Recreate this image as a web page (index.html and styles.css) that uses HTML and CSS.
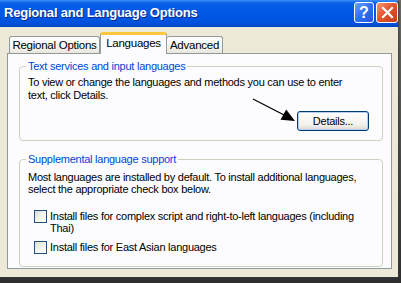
FILE: index.html
```html
<!DOCTYPE html>
<html lang="en">
<head>
    <meta charset="UTF-8">
    <title>Regional and Language Options</title>
    <link rel="stylesheet" href="styles.css">
</head>
<body>

<div class="window">
    <div class="titlebar">
        <div class="title">Regional and Language Options</div>
        <div class="tbtn help">?</div>
        <div class="tbtn close">
            <svg width="13" height="13" viewBox="0 0 13 13">
                <path d="M2 2 L11 11 M11 2 L2 11" stroke="#fff" stroke-width="2.2" stroke-linecap="square"/>
            </svg>
        </div>
    </div>

    <div class="content">
        <div class="tabs">
            <div class="tab tab-regional">Regional Options</div>
            <div class="tab active tab-languages">Languages</div>
            <div class="tab tab-advanced">Advanced</div>
        </div>

        <div class="panel">
            <fieldset class="group group-text">
                <legend>Text services and input languages</legend>
                <p>To view or change the languages and methods you can use to enter<br>text, click Details.</p>
                <div class="btn-row">
                    <button class="btn default">Details...</button>
                </div>
            </fieldset>

            <fieldset class="group group-supp">
                <legend>Supplemental language support</legend>
                <p>Most languages are installed by default. To install additional languages,<br>select the appropriate check box below.</p>
                <label class="check first">
                    <span class="box"></span>
                    <span class="check-text">Install files for complex script and right-to-left languages (including<br>Thai)</span>
                </label>
                <label class="check">
                    <span class="box"></span>
                    <span class="check-text">Install files for East Asian languages</span>
                </label>
            </fieldset>
        </div>
    </div>

    <!-- annotation arrow drawn over the dialog -->
    <svg class="arrow" viewBox="0 0 401 283" width="401" height="283">
        <line x1="253" y1="99" x2="286" y2="116" stroke="#000" stroke-width="1.3"/>
        <polygon points="295,121 280.5,119.8 286.2,109.6" fill="#000"/>
    </svg>
</div>

</body>
</html>
```

FILE: styles.css
```css
html, body {
    margin: 0;
    padding: 0;
}
body {
    width: 401px;
    height: 283px;
    overflow: hidden;
    background: linear-gradient(to bottom, #6d6d66, #2e2e2e);
    font-family: "Liberation Sans", Arial, sans-serif;
    font-size: 11px;
    letter-spacing: -0.25px;
    color: #000;
}
.window {
    position: relative;
    width: 398px;
    height: 277px;
    background-color: #ece9d8;
    box-shadow: 1px 1px 2px #3a3a3a;
    display: flex;
    flex-direction: column;
}
.titlebar {
    height: 27px;
    box-sizing: border-box;
    display: flex;
    align-items: center;
    padding: 0 0 2px 4px;
    background: linear-gradient(to bottom, #3d8ff7 0, #0a60e8 3px, #0058e8 40%, #0052dc 85%, #0046c4 100%);
}
.title {
    flex: 1;
    color: white;
    font-weight: bold;
    font-size: 13px;
    letter-spacing: -0.2px;
    text-shadow: 1px 1px 0 #0a2a8a;
}
.tbtn {
    width: 20px;
    height: 21px;
    box-sizing: border-box;
    border: 1px solid #fff;
    border-radius: 3px;
    display: flex;
    align-items: center;
    justify-content: center;
    color: white;
    font-weight: bold;
    font-size: 16px;
    letter-spacing: 0;
}
.help {
    margin-right: 2px;
    background: linear-gradient(135deg, #6aa0ff, #2f6ff0 50%, #1d5ae0);
}
.close {
    width: 22px;
    background: linear-gradient(135deg, #f29a78, #e2562f 45%, #c73d1a);
}
.content {
    flex: 1;
    padding: 5px 6px 0 7px;
}
.tabs {
    display: flex;
    align-items: flex-end;
    height: 21px;
    padding-left: 2px;
}
.tab {
    height: 17px;
    box-sizing: border-box;
    border: 1px solid #919b9c;
    border-bottom: none;
    border-radius: 3px 3px 0 0;
    background: linear-gradient(to bottom, #ffffff, #f3f2ec 70%, #e8e6dc);
    display: flex;
    align-items: center;
    justify-content: center;
    font-size: 11.5px;
}
.tab-regional {
    width: 91px;
}
.tab-advanced {
    width: 56px;
    border-left: none;
}
.tab.active {
    width: 67px;
    height: 22px;
    margin-bottom: -1px;
    position: relative;
    z-index: 1;
    background: #fcfcfe;
    border-top: 3px solid #ffc83c;
    padding-bottom: 4px;
}
.panel {
    height: 216px;
    box-sizing: border-box;
    border: 1px solid #919b9c;
    background-color: #fcfcfe;
    padding: 6px 8px 0 11px;
}
.group {
    margin: 0;
    border: 1px solid #d0d0bf;
    border-radius: 4px;
    padding: 0 0 0 8px;
    font-size: 11px;
    line-height: 13px;
}
.group legend {
    color: #0046d5;
    padding: 0 2px;
    margin-left: -2px;
    line-height: 13px;
}
.group p {
    margin: 3px 0 0 0;
}
.group-text {
    padding-bottom: 9px;
}
.btn-row {
    display: flex;
    justify-content: flex-end;
    padding-right: 13px;
    margin-top: 9px;
}
.btn {
    width: 72px;
    height: 20px;
    border: 1px solid #003c74;
    border-radius: 3px;
    background: linear-gradient(to bottom, #ffffff, #f2f1ec 70%, #dcd8cc);
    box-shadow: inset 0 0 0 1px #b8cdf6;
    font-family: inherit;
    font-size: 11px;
    letter-spacing: inherit;
    padding: 0;
    color: #000;
}
.group-supp {
    margin-top: 12px;
    padding-bottom: 12px;
    line-height: 12px;
}
.group-supp p {
    margin-top: 5px;
}
.check {
    display: flex;
    align-items: flex-start;
    margin-left: 6px;
    margin-top: 7px;
}
.check.first {
    margin-top: 15px;
}
.box {
    flex: none;
    width: 13px;
    height: 13px;
    box-sizing: border-box;
    border: 1px solid #1c5180;
    background: linear-gradient(135deg, #dcdcd7, #f6f6f3 60%, #ffffff);
    margin-right: 3px;
}
.arrow {
    position: absolute;
    left: 0;
    top: 0;
    pointer-events: none;
}
```
